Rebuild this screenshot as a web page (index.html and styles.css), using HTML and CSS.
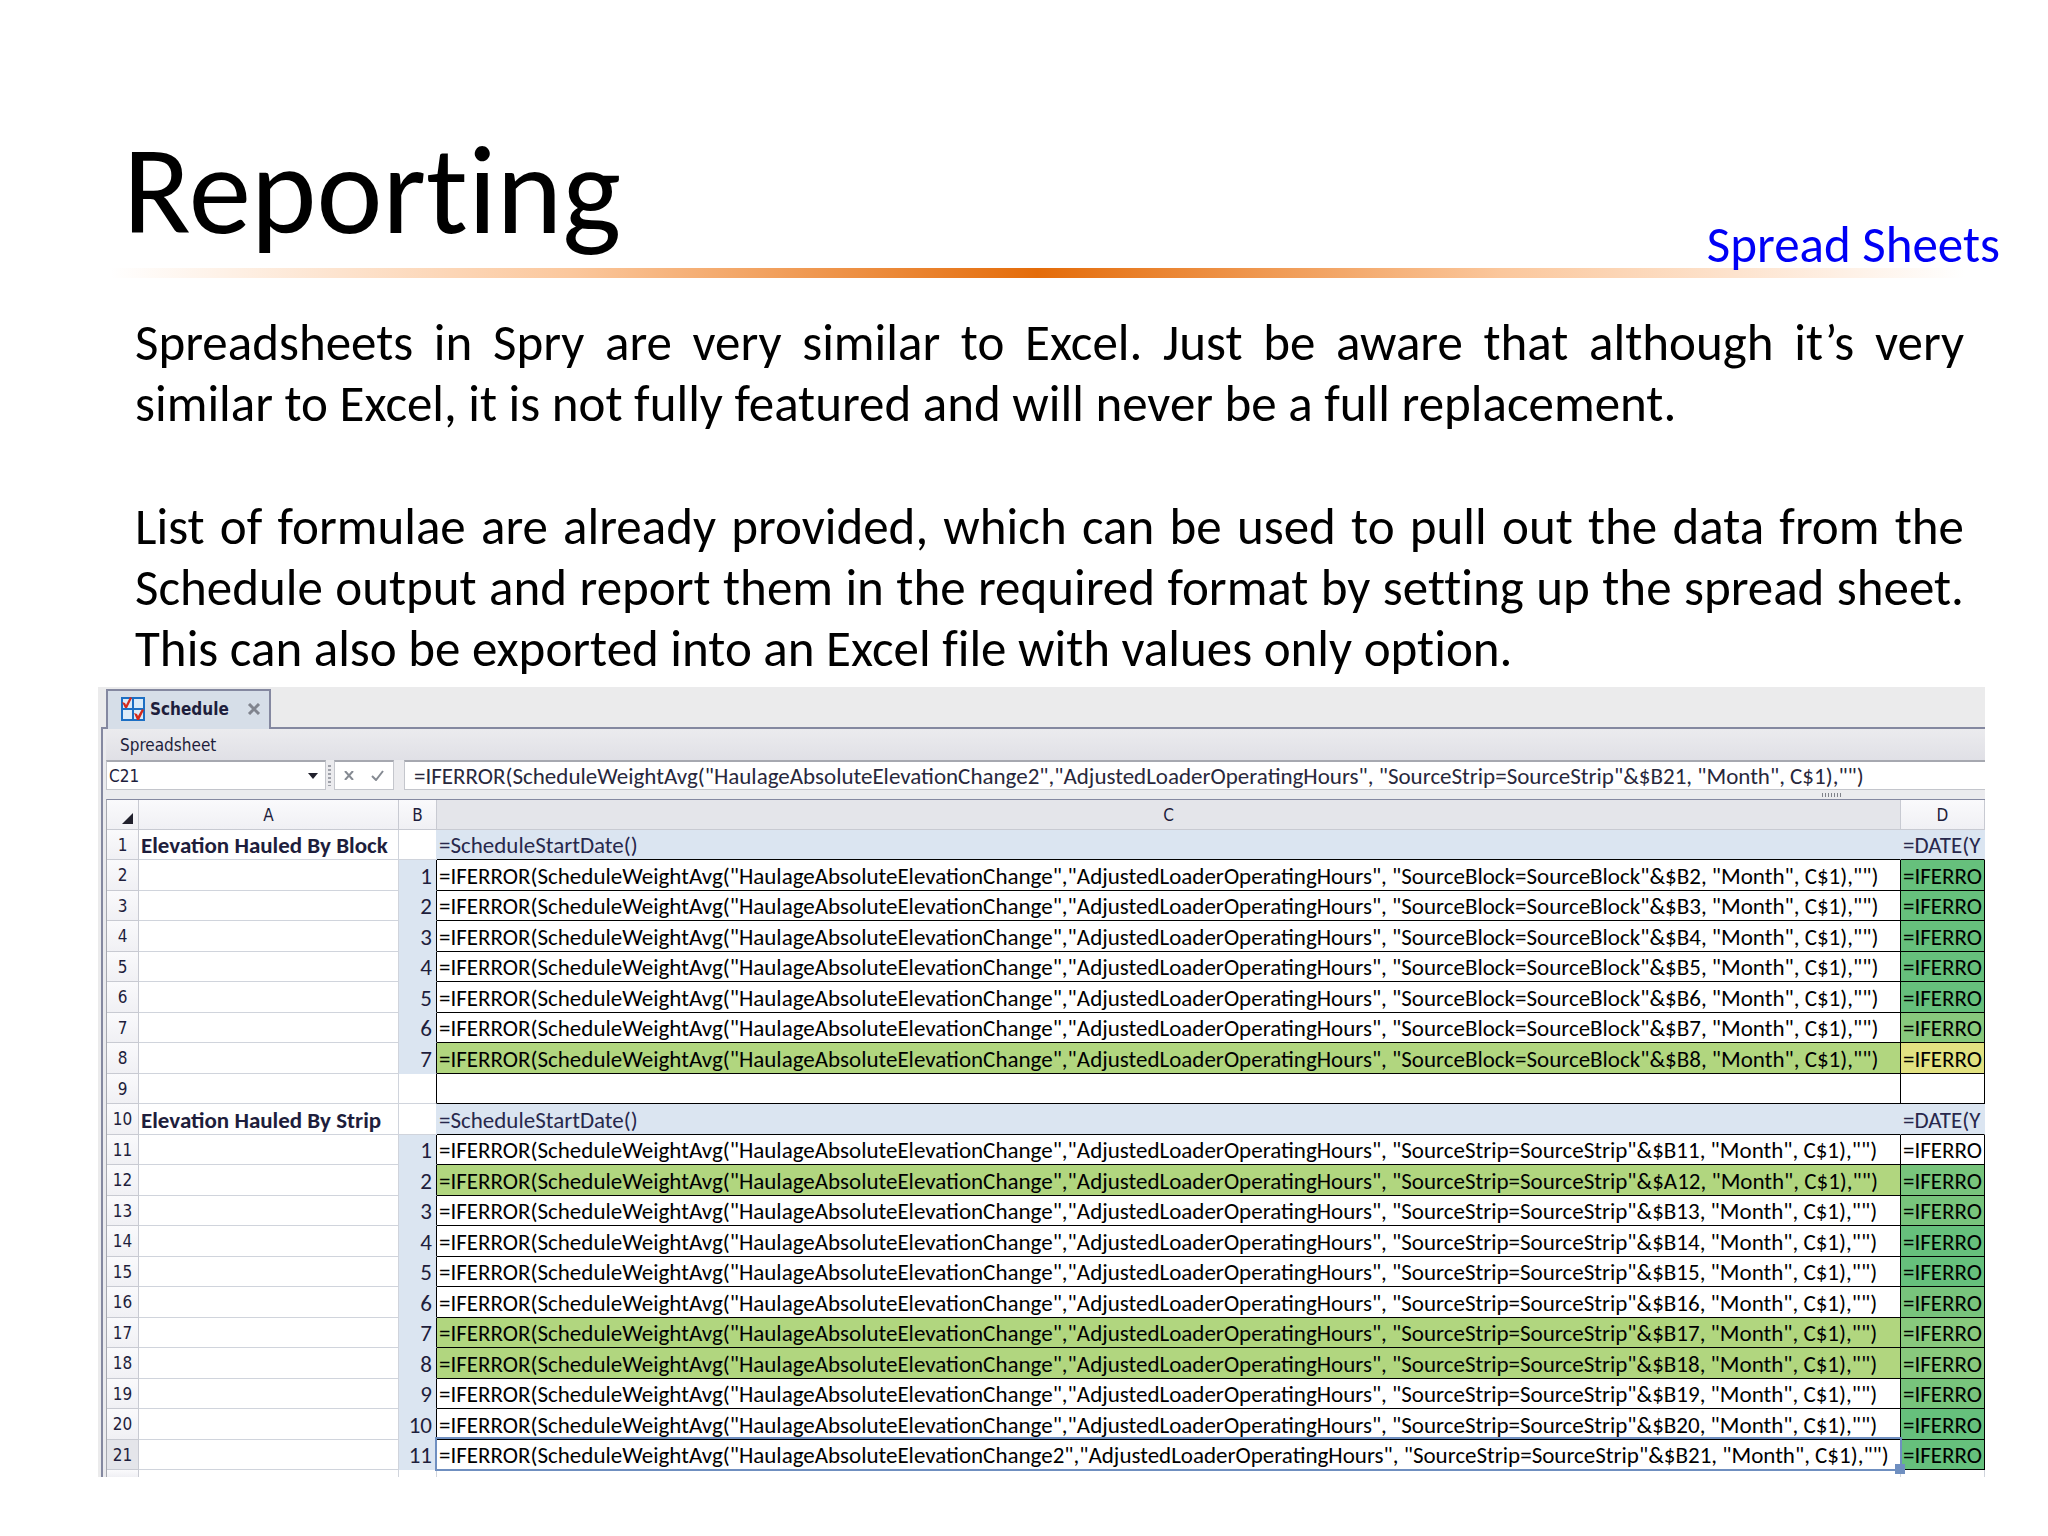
FILE: index.html
```html
<!DOCTYPE html>
<html lang="en">
<head>
    <meta charset="UTF-8">
    <meta name="viewport" content="width=device-width, initial-scale=1.0">
    <title>Reporting - Spread Sheets</title>
    <link rel="stylesheet" href="styles.css">
</head>
<body>
    <header class="slide-header">
        <h1>Reporting</h1>
        <p class="topic">Spread Sheets</p>
    </header>
    <div class="rule"></div>

    <main>
        <div class="slide-text">
            <p>Spreadsheets in Spry are very similar to Excel. Just be aware that although it’s very similar to Excel, it is not fully featured and will never be a full replacement.</p>
            <p>List of formulae are already provided, which can be used to pull out the data from the Schedule output and report them in the required format by setting up the spread sheet. This can also be exported into an Excel file with values only option.</p>
        </div>

        <section class="app">
            <div class="tab-bar">
                <div class="tab">
                    <svg class="tab-icon" width="24" height="24" viewBox="0 0 24 24">
                        <rect width="24" height="24" fill="#1c6fc4"/>
                        <path d="M2 2h9v9H2zM13 2h9v9h-9zM2 13h9v9H2zM13 13h9v9h-9z" fill="#dcebf8"/>
                        <path d="M1 5l3 1 1 2 4-8 2 1-5 10H4zM13 16l3 1 1 2 4-7 2 1-5 10h-2z" fill="#d42a1c"/>
                    </svg>
                    <span>Schedule</span>
                    <button class="tab-close" aria-label="Close tab">
                        <svg width="14" height="12" viewBox="0 0 14 12"><path d="M2 1l10 10M12 1L2 11" stroke="#80848e" stroke-width="3"/></svg>
                    </button>
                </div>
            </div>

            <div class="panel">
                <div class="menu-row">Spreadsheet</div>

                <div class="formula-row">
                    <div class="name-box">
                        <input type="text" value="C21" aria-label="Cell name">
                        <button aria-label="Choose cell">
                            <svg width="10" height="6" viewBox="0 0 10 6"><path d="M0 0h10L5 6z" fill="#20202c"/></svg>
                        </button>
                    </div>
                    <div class="splitter"></div>
                    <div class="edit-buttons">
                        <button aria-label="Cancel">
                            <svg width="10" height="9" viewBox="0 0 10 9"><path d="M1 0l8 9M9 0L1 9" stroke="#858a92" stroke-width="2"/></svg>
                        </button>
                        <button aria-label="Enter">
                            <svg width="13" height="11" viewBox="0 0 13 11"><path d="M1 6l4 4 7-9" fill="none" stroke="#858a92" stroke-width="2"/></svg>
                        </button>
                    </div>
                    <input class="formula" type="text" aria-label="Formula" value='=IFERROR(ScheduleWeightAvg("HaulageAbsoluteElevationChange2","AdjustedLoaderOperatingHours", "SourceStrip=SourceStrip"&amp;$B21, "Month", C$1),"")'>
                </div>
                <div class="grip-row"><div class="grip"></div></div>

                <table class="grid">
                    <colgroup>
                        <col class="col-num"><col class="col-a"><col class="col-b"><col><col class="col-d">
                    </colgroup>
                    <thead>
                        <tr>
                            <th class="corner"><svg width="11" height="11" viewBox="0 0 11 11"><path d="M11 0v11H0z" fill="#20202c"/></svg></th>
                            <th>A</th><th>B</th><th class="active">C</th><th>D</th>
                        </tr>
                    </thead>
                    <tbody>
                        <tr class="dates"><th>1</th><td>Elevation Hauled By Block</td><td></td><td>=ScheduleStartDate()</td><td>=DATE(Y</td></tr>
                        <tr><th>2</th><td></td><td>1</td><td>=IFERROR(ScheduleWeightAvg("HaulageAbsoluteElevationChange","AdjustedLoaderOperatingHours", "SourceBlock=SourceBlock"&amp;$B2, "Month", C$1),"")</td><td class="green">=IFERRO</td></tr>
                        <tr><th>3</th><td></td><td>2</td><td>=IFERROR(ScheduleWeightAvg("HaulageAbsoluteElevationChange","AdjustedLoaderOperatingHours", "SourceBlock=SourceBlock"&amp;$B3, "Month", C$1),"")</td><td class="green">=IFERRO</td></tr>
                        <tr><th>4</th><td></td><td>3</td><td>=IFERROR(ScheduleWeightAvg("HaulageAbsoluteElevationChange","AdjustedLoaderOperatingHours", "SourceBlock=SourceBlock"&amp;$B4, "Month", C$1),"")</td><td class="green">=IFERRO</td></tr>
                        <tr><th>5</th><td></td><td>4</td><td>=IFERROR(ScheduleWeightAvg("HaulageAbsoluteElevationChange","AdjustedLoaderOperatingHours", "SourceBlock=SourceBlock"&amp;$B5, "Month", C$1),"")</td><td class="green">=IFERRO</td></tr>
                        <tr><th>6</th><td></td><td>5</td><td>=IFERROR(ScheduleWeightAvg("HaulageAbsoluteElevationChange","AdjustedLoaderOperatingHours", "SourceBlock=SourceBlock"&amp;$B6, "Month", C$1),"")</td><td class="green">=IFERRO</td></tr>
                        <tr><th>7</th><td></td><td>6</td><td>=IFERROR(ScheduleWeightAvg("HaulageAbsoluteElevationChange","AdjustedLoaderOperatingHours", "SourceBlock=SourceBlock"&amp;$B7, "Month", C$1),"")</td><td class="green-pale">=IFERRO</td></tr>
                        <tr><th>8</th><td></td><td>7</td><td class="lime">=IFERROR(ScheduleWeightAvg("HaulageAbsoluteElevationChange","AdjustedLoaderOperatingHours", "SourceBlock=SourceBlock"&amp;$B8, "Month", C$1),"")</td><td class="yellow">=IFERRO</td></tr>
                        <tr class="blank"><th>9</th><td></td><td></td><td></td><td></td></tr>
                        <tr class="dates"><th>10</th><td>Elevation Hauled By Strip</td><td></td><td>=ScheduleStartDate()</td><td>=DATE(Y</td></tr>
                        <tr><th>11</th><td></td><td>1</td><td>=IFERROR(ScheduleWeightAvg("HaulageAbsoluteElevationChange","AdjustedLoaderOperatingHours", "SourceStrip=SourceStrip"&amp;$B11, "Month", C$1),"")</td><td>=IFERRO</td></tr>
                        <tr><th>12</th><td></td><td>2</td><td class="lime">=IFERROR(ScheduleWeightAvg("HaulageAbsoluteElevationChange","AdjustedLoaderOperatingHours", "SourceStrip=SourceStrip"&amp;$A12, "Month", C$1),"")</td><td class="green-mid">=IFERRO</td></tr>
                        <tr><th>13</th><td></td><td>3</td><td>=IFERROR(ScheduleWeightAvg("HaulageAbsoluteElevationChange","AdjustedLoaderOperatingHours", "SourceStrip=SourceStrip"&amp;$B13, "Month", C$1),"")</td><td class="green-mid">=IFERRO</td></tr>
                        <tr><th>14</th><td></td><td>4</td><td>=IFERROR(ScheduleWeightAvg("HaulageAbsoluteElevationChange","AdjustedLoaderOperatingHours", "SourceStrip=SourceStrip"&amp;$B14, "Month", C$1),"")</td><td class="green">=IFERRO</td></tr>
                        <tr><th>15</th><td></td><td>5</td><td>=IFERROR(ScheduleWeightAvg("HaulageAbsoluteElevationChange","AdjustedLoaderOperatingHours", "SourceStrip=SourceStrip"&amp;$B15, "Month", C$1),"")</td><td class="green">=IFERRO</td></tr>
                        <tr><th>16</th><td></td><td>6</td><td>=IFERROR(ScheduleWeightAvg("HaulageAbsoluteElevationChange","AdjustedLoaderOperatingHours", "SourceStrip=SourceStrip"&amp;$B16, "Month", C$1),"")</td><td class="green-mid">=IFERRO</td></tr>
                        <tr><th>17</th><td></td><td>7</td><td class="lime">=IFERROR(ScheduleWeightAvg("HaulageAbsoluteElevationChange","AdjustedLoaderOperatingHours", "SourceStrip=SourceStrip"&amp;$B17, "Month", C$1),"")</td><td class="green-pale">=IFERRO</td></tr>
                        <tr><th>18</th><td></td><td>8</td><td class="lime">=IFERROR(ScheduleWeightAvg("HaulageAbsoluteElevationChange","AdjustedLoaderOperatingHours", "SourceStrip=SourceStrip"&amp;$B18, "Month", C$1),"")</td><td class="green-pale">=IFERRO</td></tr>
                        <tr><th>19</th><td></td><td>9</td><td>=IFERROR(ScheduleWeightAvg("HaulageAbsoluteElevationChange","AdjustedLoaderOperatingHours", "SourceStrip=SourceStrip"&amp;$B19, "Month", C$1),"")</td><td class="green-mid">=IFERRO</td></tr>
                        <tr><th>20</th><td></td><td>10</td><td>=IFERROR(ScheduleWeightAvg("HaulageAbsoluteElevationChange","AdjustedLoaderOperatingHours", "SourceStrip=SourceStrip"&amp;$B20, "Month", C$1),"")</td><td class="green">=IFERRO</td></tr>
                        <tr><th class="active">21</th><td></td><td>11</td><td class="selected">=IFERROR(ScheduleWeightAvg("HaulageAbsoluteElevationChange2","AdjustedLoaderOperatingHours", "SourceStrip=SourceStrip"&amp;$B21, "Month", C$1),"")</td><td class="green">=IFERRO</td></tr>
                        <tr class="cut"><th></th><td></td><td></td><td></td><td></td></tr>
                    </tbody>
                </table>
            </div>
        </section>
    </main>
</body>
</html>
```
FILE: styles.css
```css
* {
    margin: 0;
    padding: 0;
    box-sizing: border-box;
}

body {
    font-family: Carlito, Calibri, Lato, sans-serif;
    background: #fff;
    color: #000;
}

button,
input {
    font: inherit;
    color: inherit;
    background: none;
    border: none;
    outline: none;
}

svg {
    display: block;
}

/* slide heading */
.slide-header {
    display: flex;
    justify-content: space-between;
    align-items: flex-end;
    padding: 114px 48px 0 123px;
}

.slide-header h1 {
    font-size: 125px;
    font-weight: normal;
    line-height: 154px;
    font-variant-ligatures: none;
}

.topic {
    font-size: 51px;
    line-height: 61px;
    color: #0000f5;
    margin-bottom: -7px;
    position: relative;
}

.rule {
    height: 10px;
    margin: 0 83px 0 110px;
    background: linear-gradient(90deg, #fff, #fbc79c 25%, #e46c0a 50%, #fbc79c 75%, #fff);
}

.slide-text {
    padding: 34px 84px 0 135px;
    font-size: 51px;
    line-height: 61px;
    text-align: justify;
    font-variant-ligatures: none;
}

.slide-text p + p {
    margin-top: 62px;
}

/* spreadsheet window */
.app {
    margin: 8px 63px 0 98px;
    padding: 2px 0 0 3px;
    background: #ebebec;
    color: #1e1e3c;
}

.tab-bar {
    display: flex;
    padding-left: 5px;
    font: bold 17px/20px 'DejaVu Sans Condensed', sans-serif;
}

.tab {
    display: flex;
    align-items: center;
    width: 165px;
    height: 40px;
    padding: 0 8px 2px 13px;
    margin-bottom: -2px;
    background: #d6dee8;
    border: 2px solid #8488a0;
    border-bottom: none;
    position: relative;
}

.tab-icon {
    margin-right: 5px;
}

.tab-close {
    margin-left: auto;
}

.panel {
    border-top: 2px solid #8488a0;
    border-left: 2px solid #8488a0;
    padding-left: 3px;
    background: #ebebee;
}

.menu-row {
    height: 31px;
    padding: 0 14px;
    font: 17px/33px 'DejaVu Sans Condensed', sans-serif;
    background: linear-gradient(#ebebee, #e0e0e6);
}

.formula-row {
    display: flex;
    height: 30px;
}

.name-box,
.edit-buttons,
.formula {
    background: #fff;
    border: 1px solid #c4c6cc;
    border-top: 2px solid #a6a8b0;
}

.name-box {
    display: flex;
    width: 220px;
    font: 17px/20px 'DejaVu Sans Condensed', sans-serif;
}

.name-box input {
    flex: 1;
    min-width: 0;
    padding-left: 2px;
}

.name-box button {
    padding: 0 7px;
}

.splitter {
    width: 3px;
    margin: 5px 3px 4px 2px;
    background: repeating-linear-gradient(#a0a2aa 0 2px, transparent 2px 4px);
}

.edit-buttons {
    display: flex;
    justify-content: space-around;
    width: 60px;
}

.formula {
    flex: 1;
    min-width: 0;
    margin-left: 10px;
    padding-left: 9px;
    border-right: none;
    font-size: 23px;
    color: #28283c;
}

.grip-row {
    height: 9px;
    padding: 3px 142px 0 0;
}

.grip {
    width: 21px;
    height: 4px;
    margin-left: auto;
    background: repeating-linear-gradient(90deg, #80828a 0 1px, transparent 1px 3px);
}

/* cell grid */
.grid {
    width: 100%;
    table-layout: fixed;
    border-spacing: 0;
    border-top: 1px solid #8488a0;
    border-left: 1px solid #a6a8b0;
    background: #fff;
    font-size: 23px;
    line-height: 27px;
}

.col-num { width: 32px; }
.col-a { width: 260px; }
.col-b { width: 38px; }
.col-d { width: 84px; }

.grid tr {
    height: 30px;
}

.grid tbody tr:nth-child(even) {
    height: 31px;
}

.grid th {
    font: 17px/20px 'DejaVu Sans Condensed', sans-serif;
    background: linear-gradient(#fafafc, #f0f0f4);
    border-right: 1px solid #c8cad2;
    border-bottom: 1px solid #c8cad2;
}

.grid th.active {
    background: #e4e5ea;
}

.grid .corner svg {
    margin: 8px 5px 0 auto;
}

.grid td {
    white-space: nowrap;
    overflow: hidden;
    padding-top: 2px;
    padding-left: 2px;
    border-right: 1px solid #000;
    border-bottom: 1px solid #000;
    color: #000;
}

.grid td:nth-child(2) {
    border-color: #d0d4dc;
    font-weight: bold;
    color: #1e1e3c;
}

.grid td:nth-child(3) {
    text-align: right;
    padding-right: 4px;
    background: #dbe5f1;
    border-bottom-color: #dbe5f1;
    color: #1e1e3c;
}

.grid .dates td:nth-child(3),
.grid .blank td:nth-child(3) {
    background: #fff;
    border-bottom-color: #d0d4dc;
}

.grid .dates td:nth-child(3) {
    border-right-color: #dbe5f1;
}

.grid .dates td:nth-child(n+4) {
    background: #dbe5f1;
    border-right-color: #dbe5f1;
    color: #28284c;
}

.grid td.green { background: #66c07c; }
.grid td.green-mid { background: #78c47c; }
.grid td.green-pale { background: #88c97d; }
.grid td.lime { background: #b1d67f; }
.grid td.yellow { background: #e2e282; }

.grid td.selected {
    position: relative;
    overflow: visible;
}

.selected::before {
    content: '';
    position: absolute;
    inset: -3px -2px -2px -2px;
    border: 2px solid #6f8fc0;
}

.selected::after {
    content: '';
    position: absolute;
    right: -5px;
    bottom: -5px;
    width: 10px;
    height: 10px;
    background: #6f8fc0;
}

/* last row runs off the bottom of the window */
.grid tbody tr.cut {
    height: 7px;
}

.grid .cut th {
    border-bottom: none;
}

.grid .cut td:nth-child(n) {
    background: #fff;
    border-bottom: none;
    border-right-color: #d0d4dc;
}
```
